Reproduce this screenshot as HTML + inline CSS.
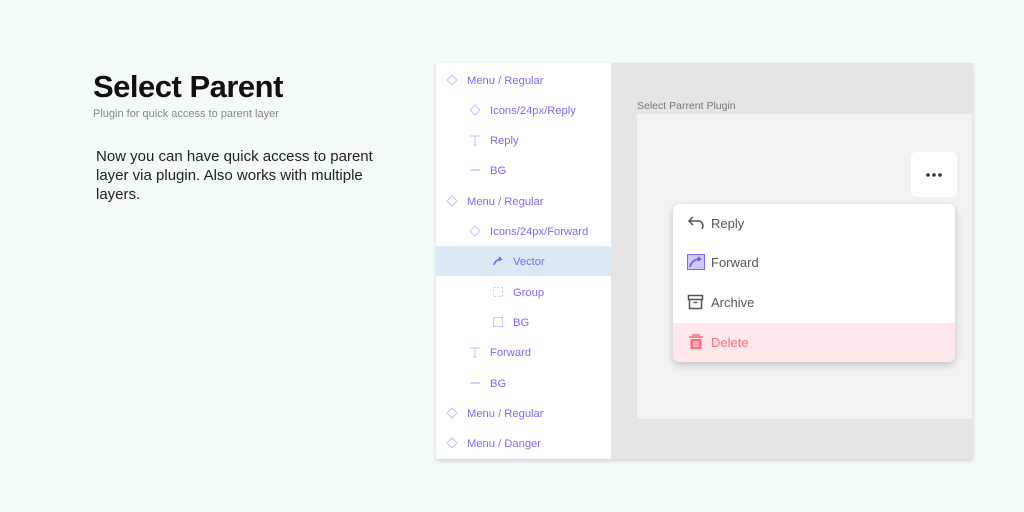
<!DOCTYPE html>
<html><head><style>
body{margin:0;width:1024px;height:512px;background:#f4fbfb;font-family:"Liberation Sans",sans-serif;position:relative;overflow:hidden}
.a{position:absolute}
.row{position:absolute;left:436px;width:175px;height:30px;color:#7b6cf0;font-size:11.2px;line-height:32px}
.row svg{position:absolute;top:9px}
.row span{position:absolute}
.mi{position:absolute;left:673px;width:282px;height:39px;font-size:13px;color:#555;line-height:39px}
.mi span{position:absolute;left:38px}
.mi svg{position:absolute;left:14px;top:11px}
</style></head><body>
<div class="a" style="left:93px;top:69px;font-size:31px;font-weight:bold;color:#111;letter-spacing:-0.5px">Select Parent</div>
<div class="a" style="left:93px;top:108px;font-size:11px;color:#888">Plugin for quick access to parent layer</div>
<div class="a" style="left:96px;top:147px;font-size:15px;line-height:19px;color:#222;width:300px">Now you can have quick access to parent layer via plugin. Also works with multiple layers.</div>

<div class="a" style="left:436px;top:63px;width:537px;height:396px;background:#e5e5e5;box-shadow:0 2px 4px rgba(0,0,0,.15)"></div>
<div class="a" style="left:436px;top:63px;width:175px;height:396px;background:#fff"></div>
<div class="a" style="left:637px;top:100px;font-size:10.5px;color:#777">Select Parrent Plugin</div>
<div class="a" style="left:637px;top:114px;width:335px;height:305px;background:#f2f2f2"></div>
<div class="a" style="left:436px;top:246px;width:175px;height:30px;background:#dce9f5"></div>

<div class="row" style="top:65px"><svg style="left:10px" width="12" height="12"><path d="M6 1L11 6L6 11L1 6Z" fill="none" stroke="#c9c2fb"/></svg><span style="left:31px">Menu / Regular</span></div>
<div class="row" style="top:95px"><svg style="left:33px" width="12" height="12"><path d="M6 1L11 6L6 11L1 6Z" fill="none" stroke="#c9c2fb"/></svg><span style="left:54px">Icons/24px/Reply</span></div>
<div class="row" style="top:125px"><svg style="left:33px" width="12" height="12"><path d="M1 2H11M6 2V11M4 11H8" fill="none" stroke="#c9c2fb"/></svg><span style="left:54px">Reply</span></div>
<div class="row" style="top:155px"><svg style="left:33px" width="12" height="12"><path d="M1 6H11" stroke="#c9c2fb" stroke-width="1.5"/></svg><span style="left:54px">BG</span></div>
<div class="row" style="top:186px"><svg style="left:10px" width="12" height="12"><path d="M6 1L11 6L6 11L1 6Z" fill="none" stroke="#c9c2fb"/></svg><span style="left:31px">Menu / Regular</span></div>
<div class="row" style="top:216px"><svg style="left:33px" width="12" height="12"><path d="M6 1L11 6L6 11L1 6Z" fill="none" stroke="#c9c2fb"/></svg><span style="left:54px">Icons/24px/Forward</span></div>
<div class="row" style="top:246px"><svg style="left:56px" width="12" height="12"><path d="M2 10C3 6 6 4 9 4L7 2M9 4L7 6" fill="none" stroke="#7b6cf0" stroke-width="1.6"/></svg><span style="left:77px">Vector</span></div>
<div class="row" style="top:277px"><svg style="left:56px" width="12" height="12"><rect x="1.5" y="1.5" width="9" height="9" fill="none" stroke="#c9c2fb" stroke-dasharray="2 2"/></svg><span style="left:77px">Group</span></div>
<div class="row" style="top:307px"><svg style="left:56px" width="12" height="12"><rect x="1.5" y="1.5" width="9" height="9" fill="none" stroke="#c9c2fb"/></svg><span style="left:77px">BG</span></div>
<div class="row" style="top:337px"><svg style="left:33px" width="12" height="12"><path d="M1 2H11M6 2V11M4 11H8" fill="none" stroke="#c9c2fb"/></svg><span style="left:54px">Forward</span></div>
<div class="row" style="top:368px"><svg style="left:33px" width="12" height="12"><path d="M1 6H11" stroke="#c9c2fb" stroke-width="1.5"/></svg><span style="left:54px">BG</span></div>
<div class="row" style="top:398px"><svg style="left:10px" width="12" height="12"><path d="M6 1L11 6L6 11L1 6Z" fill="none" stroke="#c9c2fb"/></svg><span style="left:31px">Menu / Regular</span></div>
<div class="row" style="top:428px"><svg style="left:10px" width="12" height="12"><path d="M6 1L11 6L6 11L1 6Z" fill="none" stroke="#c9c2fb"/></svg><span style="left:31px">Menu / Danger</span></div>

<div class="a" style="left:911px;top:152px;width:46px;height:45px;background:#fff;border-radius:5px"></div>
<svg class="a" style="left:911px;top:152px" width="46" height="45"><circle cx="17" cy="23" r="1.8" fill="#333"/><circle cx="23" cy="23" r="1.8" fill="#333"/><circle cx="29" cy="23" r="1.8" fill="#333"/></svg>

<div class="a" style="left:673px;top:204px;width:282px;height:158px;background:#fff;border-radius:7px;box-shadow:0 3px 8px rgba(0,0,0,.2);overflow:hidden">
<div class="a" style="left:0;top:119px;width:282px;height:39px;background:#ffe8ea"></div></div>
<div class="mi" style="top:204px"><svg width="18" height="16"><path d="M6 2L2 6L6 10M2 6H11C14 6 16 8 16 11L15 14" fill="none" stroke="#555" stroke-width="1.5"/></svg><span>Reply</span></div>
<div class="mi" style="top:243px"><svg width="18" height="16"><rect x="0.5" y="0.5" width="17" height="15" fill="#cfc8fc" stroke="#7b6cf0"/><path d="M3 13C4 8 8 5 13 5L11 3M13 5L11 7" fill="none" stroke="#6a5ae0" stroke-width="1.6"/></svg><span>Forward</span></div>
<div class="mi" style="top:283px"><svg width="18" height="16"><rect x="1.5" y="1.5" width="14" height="4" fill="none" stroke="#555" stroke-width="1.5"/><path d="M2.5 5.5V14.5H14.5V5.5M6.5 8.5H10.5" fill="none" stroke="#555" stroke-width="1.5"/></svg><span>Archive</span></div>
<div class="mi" style="top:323px;color:#ff6d7e"><svg width="18" height="16"><path d="M2 3H16M6 3V1H12V3" fill="none" stroke="#ff6d7e" stroke-width="1.5"/><rect x="3.5" y="5" width="11" height="10" rx="1" fill="#ff6d7e"/><path d="M7 7V13M9 7V13M11 7V13" stroke="#ffe8ea"/></svg><span>Delete</span></div>
</body></html>
